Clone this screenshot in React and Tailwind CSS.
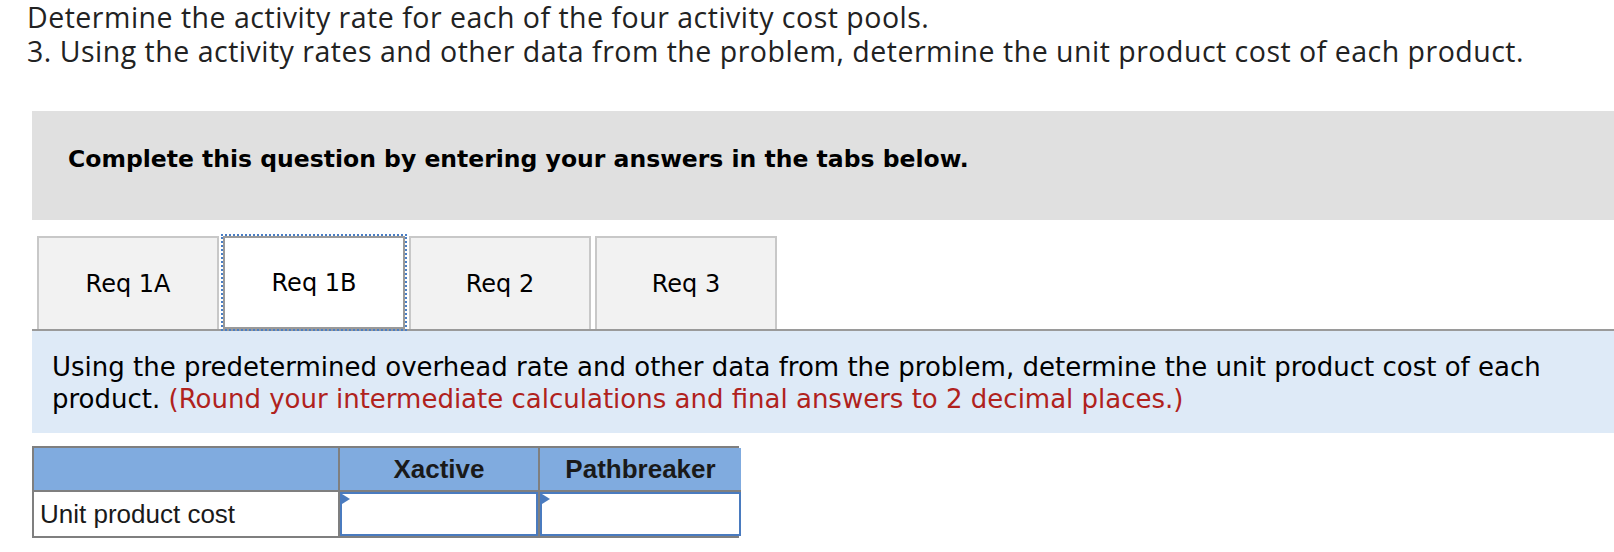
const tabs = ["Req 1A", "Req 1B", "Req 2", "Req 3"];

const Tab = ({ label, active }) => (
  <div
    className={`w-[182px] h-[93px] flex items-center justify-center text-[24px] text-black ${
      active
        ? "bg-white border-2 border-[#9a9a9a] outline-2 outline-dotted outline-[#4a7ec4] outline-offset-0"
        : "bg-[#f2f2f2] border-2 border-b-0 border-[#c8c8c8]"
    }`}
    style={{ fontFamily: '"DejaVu Sans", Verdana, sans-serif' }}
  >
    {label}
  </div>
);

const InputCell = () => (
  <div className="relative h-full border-2 border-[#4a7bbf] bg-white">
    <span className="absolute left-0 top-0 w-0 h-0 border-y-[5px] border-y-transparent border-l-[8px] border-l-[#4a7bbf]"></span>
  </div>
);

export default function App() {
  return (
    <div className="w-[1614px] h-[552px] bg-white overflow-hidden">
      {/* Intro text */}
      <div
        className="pl-[27px] text-[28.5px] leading-[34px] tracking-[0.5px] text-[#222]"
        style={{ fontFamily: '"Open Sans", Lato, sans-serif' }}
      >
        <p>Determine the activity rate for each of the four activity cost pools.</p>
        <p>3. Using the activity rates and other data from the problem, determine the unit product cost of each product.</p>
      </div>

      {/* Instructions banner */}
      <div
        className="ml-[32px] mt-[43px] h-[109px] bg-[#e0e0e0] pl-[36px] pt-[31px] text-[23.5px] font-bold text-black"
        style={{ fontFamily: '"DejaVu Sans", Verdana, sans-serif' }}
      >
        Complete this question by entering your answers in the tabs below.
      </div>

      {/* Tabs */}
      <div className="ml-[32px] mt-[16px] border-b-2 border-[#9a9a9a]">
        <div className="ml-[5px] flex gap-[4px]">
          {tabs.map((t) => (
            <Tab key={t} label={t} active={t === "Req 1B"} />
          ))}
        </div>
      </div>

      {/* Question panel */}
      <div
        className="ml-[32px] h-[102px] bg-[#deeaf7] pl-[20px] pr-[8px] pt-[20px] text-[26px] leading-[32px] text-black"
        style={{ fontFamily: '"DejaVu Sans", Verdana, sans-serif' }}
      >
        Using the predetermined overhead rate and other data from the problem, determine the unit product cost of each product.{" "}
        <span className="text-[#b0221d]">
          (Round your intermediate calculations and final answers to 2 decimal places.)
        </span>
      </div>

      {/* Answer table */}
      <div
        className="ml-[32px] mt-[13px] w-[707px] grid grid-cols-[306px_200px_201px] border-2 border-[#7f7f7f] text-[26px] text-[#1a1a1a]"
        style={{ fontFamily: '"Liberation Sans", Arial, sans-serif' }}
      >
        <div className="h-[44px] bg-[#80abdf] border-r-2 border-b-2 border-[#7f7f7f]"></div>
        <div className="h-[44px] bg-[#80abdf] border-r-2 border-b-2 border-[#7f7f7f] flex items-center justify-center font-bold">
          Xactive
        </div>
        <div className="h-[44px] bg-[#80abdf] border-b-2 border-[#7f7f7f] flex items-center justify-center font-bold">
          Pathbreaker
        </div>
        <div className="h-[44px] border-r-2 border-[#7f7f7f] flex items-center pl-[6px]">
          Unit product cost
        </div>
        <div className="h-[44px] border-r-2 border-[#7f7f7f]">
          <InputCell />
        </div>
        <div className="h-[44px]">
          <InputCell />
        </div>
      </div>
    </div>
  );
}
